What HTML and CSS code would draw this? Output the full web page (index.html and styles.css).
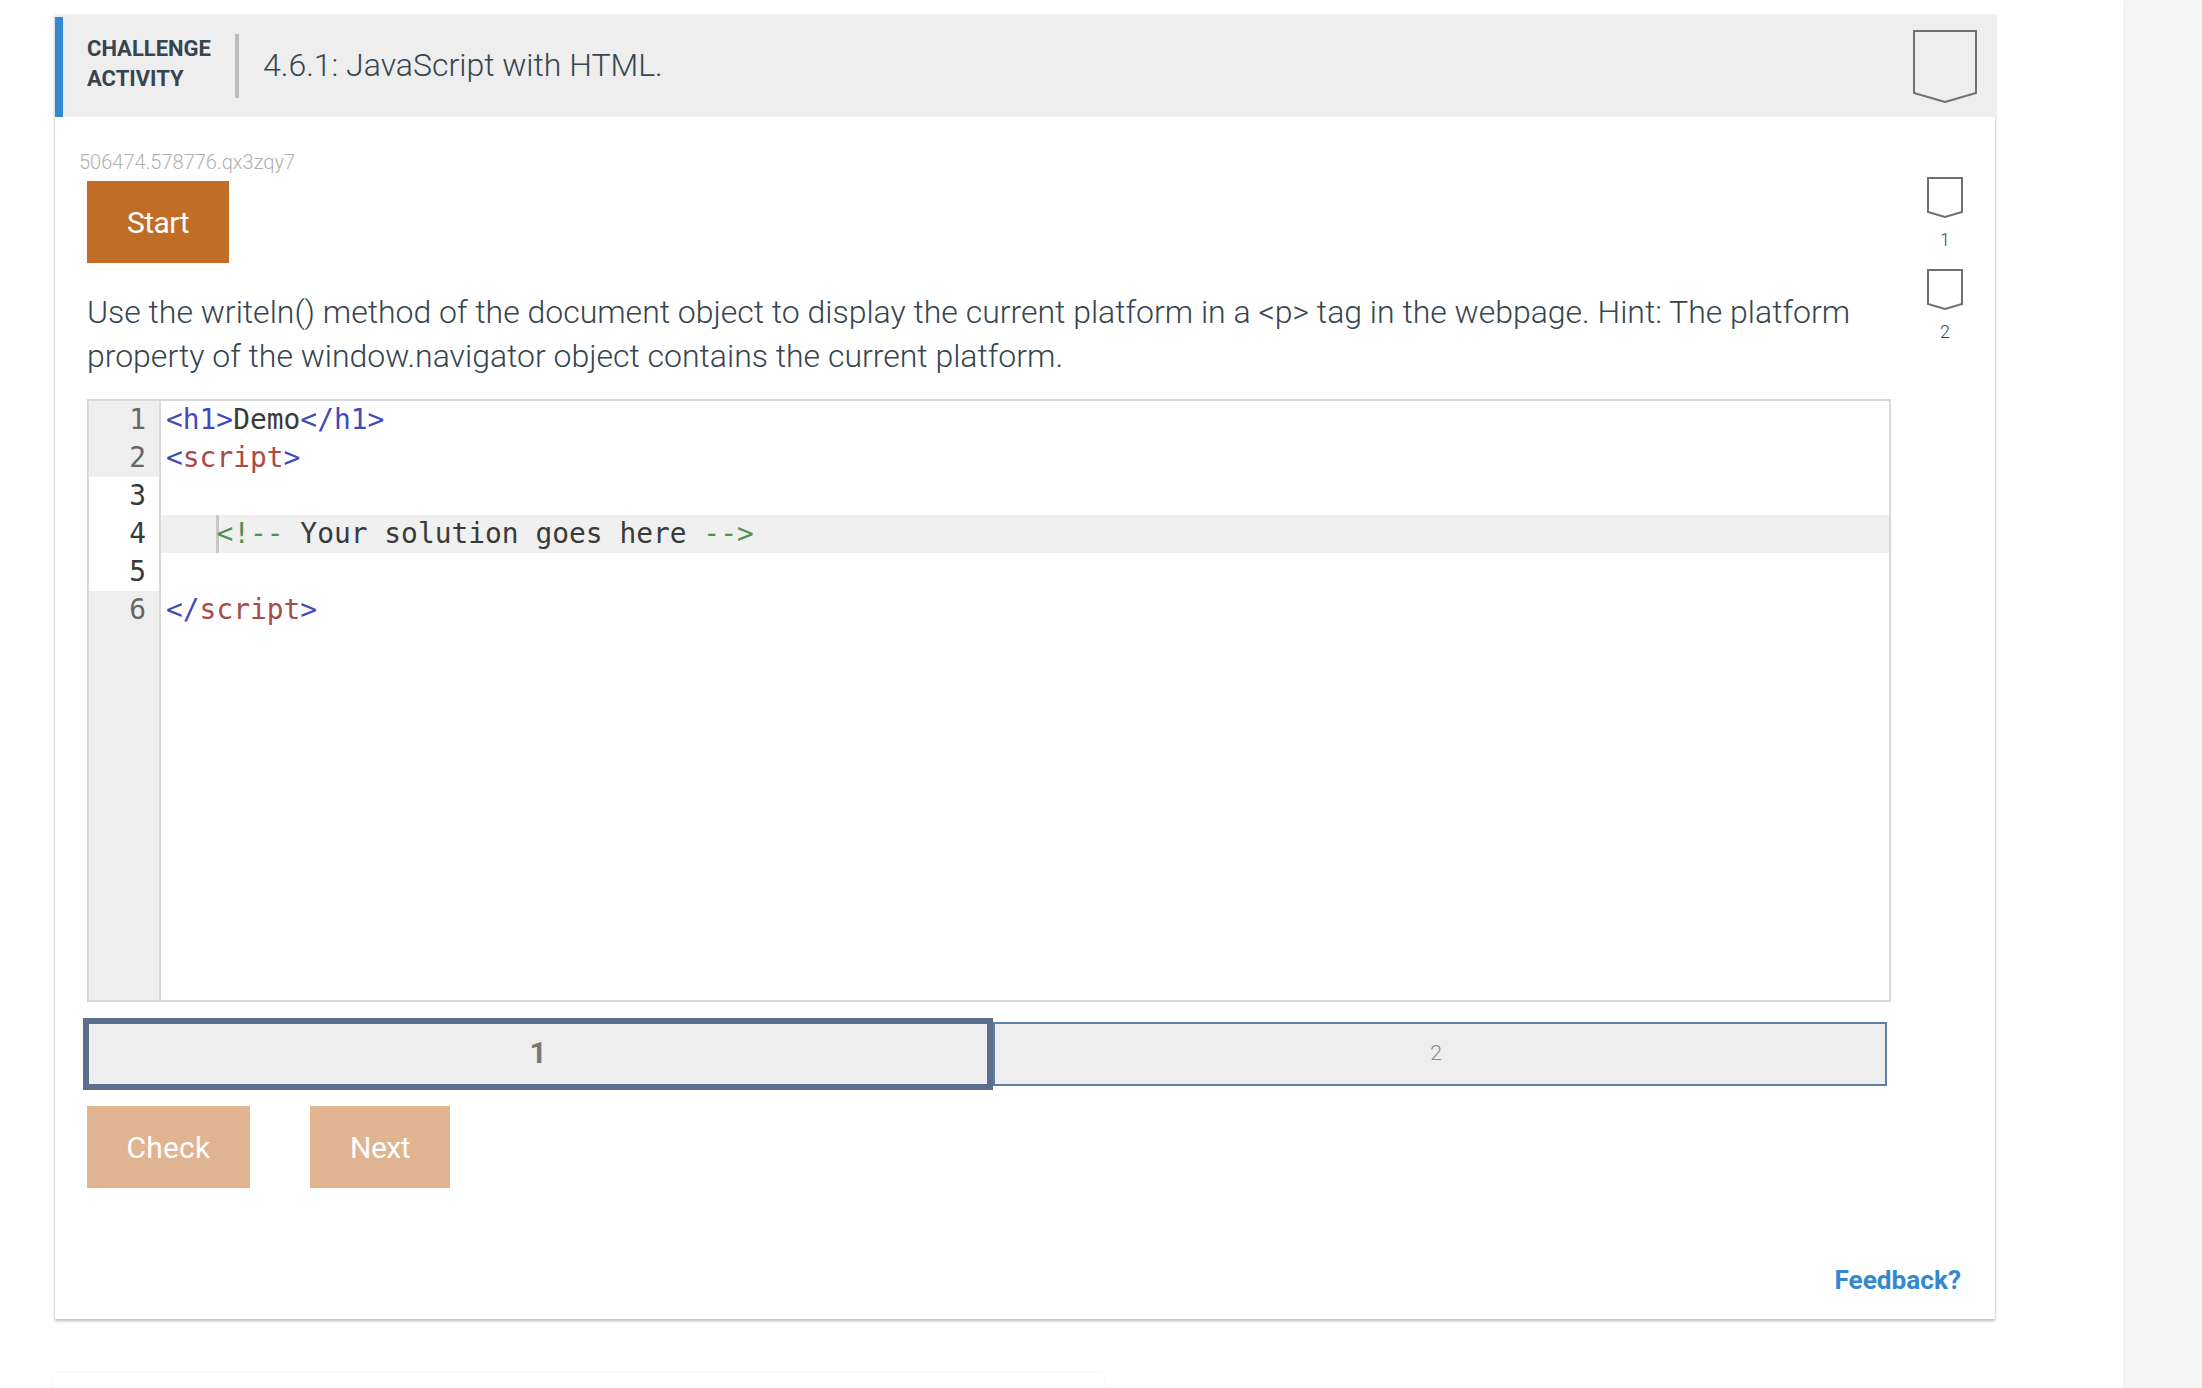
FILE: index.html
```html
<!DOCTYPE html>
<html lang="en">
<head>
<meta charset="utf-8">
<title>Challenge activity</title>
<link rel="stylesheet" href="styles.css">
</head>
<body>
<div class="page">
  <main class="main">
    <section class="card">
      <header class="card-head">
        <div class="kind">CHALLENGE<br>ACTIVITY</div>
        <h1 class="title">4.6.1: JavaScript with HTML.</h1>
        <svg class="badge-large" viewBox="0 0 64 73" aria-hidden="true"><path d="M1 1H63V63L32 72L1 63Z"/></svg>
      </header>
      <div class="card-body">
        <div class="content">
          <div class="activity-id">506474.578776.qx3zqy7</div>
          <button class="btn btn-start">Start</button>
          <p class="prompt">Use the writeln() method of the document object to display the current platform in a &lt;p&gt; tag in the webpage. Hint: The platform property of the window.navigator object contains the current platform.</p>
          <div class="editor">
            <div class="line"><span class="gutter">1</span><code class="code"><span class="tag">&lt;h1&gt;</span><span class="txt">Demo</span><span class="tag">&lt;/h1&gt;</span></code></div>
            <div class="line"><span class="gutter">2</span><code class="code"><span class="tag">&lt;</span><span class="name">script</span><span class="tag">&gt;</span></code></div>
            <div class="line line-plain"><span class="gutter">3</span><code class="code"></code></div>
            <div class="line line-plain line-active"><span class="gutter">4</span><code class="code">   <span class="guide"><span class="cmt">&lt;!--</span><span class="txt"> Your solution goes here </span><span class="cmt">--&gt;</span></span></code></div>
            <div class="line line-plain"><span class="gutter">5</span><code class="code"></code></div>
            <div class="line"><span class="gutter">6</span><code class="code"><span class="tag">&lt;/</span><span class="name">script</span><span class="tag">&gt;</span></code></div>
            <div class="line line-fill"><span class="gutter"></span><code class="code"></code></div>
          </div>
          <div class="tabs">
            <button class="tab tab-active">1</button>
            <button class="tab">2</button>
          </div>
          <div class="actions">
            <button class="btn btn-muted btn-check">Check</button>
            <button class="btn btn-muted btn-next">Next</button>
          </div>
        </div>
        <aside class="levels">
          <div class="level">
            <svg class="badge-small" viewBox="0 0 36 41" aria-hidden="true"><path d="M1 1H35V35L18 40L1 35Z"/></svg>
            <span class="level-num">1</span>
          </div>
          <div class="level">
            <svg class="badge-small" viewBox="0 0 36 41" aria-hidden="true"><path d="M1 1H35V35L18 40L1 35Z"/></svg>
            <span class="level-num">2</span>
          </div>
        </aside>
      </div>
      <footer class="card-foot"><a class="feedback">Feedback?</a></footer>
    </section>
    <section class="card-next"></section>
  </main>
  <div class="rail"></div>
</div>
</body>
</html>
```

FILE: styles.css
```css
* { box-sizing: border-box; }
html, body { margin: 0; height: 100%; background: #fff; }
body { font-family: Roboto, "Liberation Sans", sans-serif; color: #36454f; overflow: hidden; }

.page { display: flex; height: 1388px; overflow: hidden; }
.main { flex: 1; padding: 15px 0 0 55px; min-width: 0; }
.rail { width: 77px; background: #f5f5f5; box-shadow: -1px 0 2px rgba(0,0,0,.1); }

.card { width: 1940px; background: #fff; box-shadow: 0 2px 3px rgba(0,0,0,.26), 0 0 3px rgba(0,0,0,.07); }
.card-head { display: flex; align-items: center; width: 1942px; height: 102px; background: #eee; position: relative; padding-left: 32px; }
.card-head::before { content: ""; position: absolute; left: 0; top: 2px; bottom: 0; width: 8px; background: #3488cf; }
.kind { width: 152px; height: 64px; border-right: 4px solid #bdbdbd; font-size: 22px; font-weight: 700; line-height: 30px; color: #36454f; }
.title { flex: 1; margin: 0 0 3px 24px; font-size: 32px; font-weight: 300; color: #36454f; }
.badge-large { width: 64px; height: 73px; margin-right: 20px; margin-top: 1px; }
.badge-large path, .badge-small path { fill: none; stroke: #707070; stroke-width: 2; }

.card-body { display: flex; padding-left: 32px; }
.content { width: 1804px; padding-top: 33px; }
.activity-id { margin-left: -8px; height: 24px; line-height: 24px; font-size: 20px; font-weight: 300; color: #b0b0b0; margin-bottom: 7px; }

.btn { display: block; border: 0; padding: 0; height: 82px; background: #c16c27; color: #fff; font: 400 30px Roboto, sans-serif; letter-spacing: -.5px; }
.btn-start { width: 142px; }
.btn-muted { background: #e0b491; }
.btn-check { width: 163px; letter-spacing: .2px; }
.btn-next { width: 140px; }

.prompt { margin: 27px 0 21px; font-size: 32px; font-weight: 300; line-height: 44px; letter-spacing: -.012px; color: #36454f; }

.editor { display: flex; flex-direction: column; height: 603px; border: 2px solid #d9d9d9; font: 27.9px/38px "DejaVu Sans Mono", monospace; }
.line { display: flex; height: 38px; flex: none; }
.gutter { width: 72px; flex: none; padding-right: 13px; text-align: right; background: #eee; border-right: 2px solid #d9d9d9; color: #666; }
.code { flex: 1; padding-left: 5px; white-space: pre; font: inherit; color: #3a3a3a; }
.line-plain .gutter { background: #fff; color: #3a3a3a; }
.line-active .code { background: #f0f0f0; }
.line-fill { flex: 1; }
.guide { display: inline-block; box-shadow: inset 3px 0 #c8c8c8; }
.tag { color: #3f4bbd; }
.name { color: #ab4a47; }
.txt { color: #3a3a3a; }
.cmt { color: #528f52; }

.tabs { display: flex; align-items: center; margin: 16px 0 16px -4px; }
.tab { height: 64px; width: 894px; padding: 0 8px 2px 0; background: #eee; border: 2px solid #5f80a6; font: 300 21px Roboto, sans-serif; color: #8a8a8a; }
.tab-active { width: 910px; height: 72px; padding: 0 0 4px; border: 6px solid #5a6e8e; font-size: 30px; font-weight: 700; color: #777; }

.actions { display: flex; gap: 60px; }

.levels { flex: 1; display: flex; flex-direction: column; align-items: center; padding: 60px 0 0 4px; gap: 17px; }
.level { display: flex; flex-direction: column; align-items: center; }
.badge-small { width: 36px; height: 41px; display: block; }
.level-num { margin-top: 10px; height: 24px; line-height: 24px; font-size: 18px; font-weight: 300; }

.card-foot { display: flex; justify-content: flex-end; padding: 77px 34px 24px 0; }
.feedback { font-size: 26.2px; font-weight: 700; line-height: 30px; color: #3488cf; }

.card-next { width: 1051px; height: 40px; margin: 54px 0 0 -2px; background: #fff; box-shadow: 0 0 4px rgba(0,0,0,.06); }
```
